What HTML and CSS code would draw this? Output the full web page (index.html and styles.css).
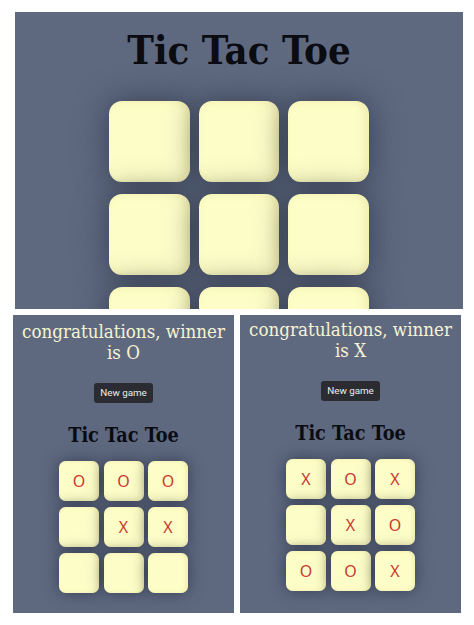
FILE: index.html
```html
<!DOCTYPE html>
<html lang="en">
<head>
<meta charset="utf-8">
<title>Tic Tac Toe</title>
<link rel="stylesheet" href="styles.css">
</head>
<body>
<div class="collage">
  <section class="panel panel--big">
    <h1 class="title">Tic Tac Toe</h1>
    <div class="board">
      <div class="cell"></div><div class="cell"></div><div class="cell"></div>
      <div class="cell"></div><div class="cell"></div><div class="cell"></div>
      <div class="cell"></div><div class="cell"></div><div class="cell"></div>
    </div>
  </section>
  <div class="row">
    <section class="panel panel--small">
      <p class="message">congratulations, winner is O</p>
      <button class="btn" type="button">New game</button>
      <h1 class="title">Tic Tac Toe</h1>
      <div class="board">
        <div class="cell">O</div><div class="cell">O</div><div class="cell">O</div>
        <div class="cell"></div><div class="cell">X</div><div class="cell">X</div>
        <div class="cell"></div><div class="cell"></div><div class="cell"></div>
      </div>
    </section>
    <section class="panel panel--small panel--raised">
      <p class="message">congratulations, winner is X</p>
      <button class="btn" type="button">New game</button>
      <h1 class="title">Tic Tac Toe</h1>
      <div class="board">
        <div class="cell">X</div><div class="cell">O</div><div class="cell">X</div>
        <div class="cell"></div><div class="cell">X</div><div class="cell">O</div>
        <div class="cell">O</div><div class="cell">O</div><div class="cell">X</div>
      </div>
    </section>
  </div>
</div>
</body>
</html>
```
FILE: styles.css
```css
* { box-sizing: border-box; }

html, body {
  margin: 0;
  padding: 0;
  background: #ffffff;
}

.collage {
  width: 474px;
  height: 625px;
  padding-top: 12px;
  display: flex;
  flex-direction: column;
  gap: 6px;
}

.row {
  display: flex;
  gap: 6px;
  padding-left: 13px;
}

.panel {
  --u: 1px;
  background: #5e6980;
  display: flex;
  flex-direction: column;
  align-items: center;
  overflow: hidden;
}

.panel--big {
  --u: 2.02px;
  margin-left: 15px;
  width: 448px;
  height: 297px;
  padding-top: 14px;
}

.panel--small {
  width: 221px;
  height: 298px;
  padding-top: 6px;
}

.panel--raised {
  padding-top: 4px;
}

.message {
  margin: 0;
  width: 100%;
  padding: 0 4px;
  text-align: center;
  font-family: "DejaVu Serif Condensed", "DejaVu Serif", serif;
  font-stretch: condensed;
  font-size: 18.6px;
  line-height: 21px;
  color: #f8f3d2;
}

.btn {
  margin-top: 20px;
  height: 20px;
  padding: 0 6px;
  border: none;
  border-radius: 3px;
  background: #2a2c31;
  color: #ececec;
  font-family: Roboto, "Noto Sans", sans-serif;
  font-size: 9.8px;
  line-height: 20px;
}

.title {
  margin: 0;
  font-family: "DejaVu Serif Condensed", "DejaVu Serif", serif;
  font-stretch: condensed;
  font-weight: bold;
  font-size: calc(var(--u) * 19.7);
  line-height: calc(var(--u) * 24);
  color: #0b0b12;
}

.panel--small .title {
  margin-top: 21px;
}

.board {
  margin-top: calc(var(--u) * 13);
  display: grid;
  grid-template-columns: repeat(3, calc(var(--u) * 40));
  grid-auto-rows: calc(var(--u) * 40);
  column-gap: calc(var(--u) * 4.5);
  row-gap: calc(var(--u) * 6.2);
}

.cell {
  background: #fdfdc7;
  border-radius: calc(var(--u) * 6.5);
  box-shadow:
    0 0 calc(var(--u) * 16) rgba(30, 35, 50, 0.6),
    inset calc(var(--u) * -2) 0 calc(var(--u) * 4) rgba(215, 205, 130, 0.35);
  display: flex;
  align-items: center;
  justify-content: center;
  font-family: "Noto Sans", sans-serif;
  font-size: 16px;
  color: #c8392e;
}
```
